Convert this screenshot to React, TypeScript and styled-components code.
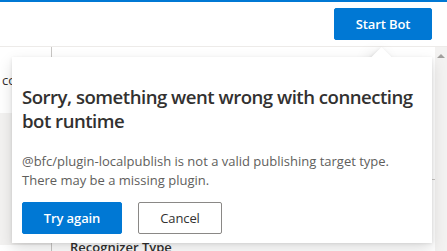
import React from "react";
import styled, { createGlobalStyle } from "styled-components";

const GlobalStyle = createGlobalStyle`
  html, body {
    margin: 0;
    padding: 0;
    background: #ffffff;
    overflow: hidden;
  }
  body {
    font-family: "Open Sans", "Noto Sans", sans-serif;
    color: #323130;
  }
  * { box-sizing: border-box; }
`;

const Page = styled.div`
  position: relative;
  width: 447px;
  height: 251px;
  overflow: hidden;
  display: flex;
  flex-direction: column;
  background: #ffffff;
`;

const TopBar = styled.header`
  flex: none;
  height: 47px;
  border-top: 2px solid #0078d4;
  border-bottom: 1px solid #edebe9;
  display: flex;
  justify-content: flex-end;
  align-items: flex-start;
  padding: 6px 15px 0 0;
`;

const Button = styled.button<{ $primary?: boolean; $width: number }>`
  width: ${(p) => p.$width}px;
  height: 32px;
  border-radius: 2px;
  font-family: "Open Sans", "Noto Sans", sans-serif;
  font-size: 13px;
  font-weight: ${(p) => (p.$primary ? 600 : 400)};
  letter-spacing: -0.1px;
  padding: 0;
  cursor: pointer;
  background: ${(p) => (p.$primary ? "#0078d4" : "#ffffff")};
  color: ${(p) => (p.$primary ? "#ffffff" : "#323130")};
  border: 1px solid ${(p) => (p.$primary ? "#0078d4" : "#8a8886")};
`;

const Body = styled.div`
  flex: 1;
  display: flex;
  min-height: 0;
`;

const LeftNav = styled.nav`
  flex: none;
  width: 52px;
  border-right: 1px solid #c8c6c4;
  display: flex;
  flex-direction: column;
  overflow: hidden;
`;

const NavItem = styled.div<{ $selected?: boolean }>`
  height: ${(p) => (p.$selected ? 132 : 66)}px;
  flex: none;
  display: flex;
  align-items: ${(p) => (p.$selected ? "flex-start" : "center")};
  padding-left: 2px;
  font-size: 13px;
  color: #323130;
  white-space: nowrap;
  background: ${(p) => (p.$selected ? "#f3f2f1" : "#ffffff")};
`;

const Main = styled.main`
  flex: 1;
  display: flex;
  flex-direction: column;
  min-width: 0;
`;

const Section = styled.section`
  flex: none;
  height: 133px;
  border-bottom: 1px solid #c8c6c4;
`;

const FieldLabel = styled.div`
  margin: 58px 0 0 18px;
  font-size: 13px;
  font-weight: 600;
  color: #323130;
  white-space: nowrap;
`;

const ScrollTrack = styled.div`
  flex: none;
  width: 12px;
  background: #f3f2f1;
  display: flex;
  justify-content: center;
  padding-top: 7px;
`;

const ArrowUp = styled.div`
  width: 0;
  height: 0;
  border-left: 4px solid transparent;
  border-right: 4px solid transparent;
  border-bottom: 4px solid #a19f9d;
`;

const Callout = styled.div`
  position: absolute;
  left: 12px;
  top: 57px;
  width: 420px;
  background: #ffffff;
  box-shadow: 0 6.4px 14.4px 0 rgba(0, 0, 0, 0.132),
    0 1.2px 3.6px 0 rgba(0, 0, 0, 0.108);
`;

const Beak = styled.div`
  position: absolute;
  left: 362px;
  top: -7.5px;
  width: 15px;
  height: 15px;
  background: #ffffff;
  transform: rotate(45deg);
  box-shadow: 0 6.4px 14.4px 0 rgba(0, 0, 0, 0.132),
    0 1.2px 3.6px 0 rgba(0, 0, 0, 0.108);
`;

const CalloutContent = styled.div`
  position: relative;
  background: #ffffff;
  padding: 28px 4px 9px 10px;
  display: flex;
  flex-direction: column;
`;

const Title = styled.h2`
  margin: 0;
  font-size: 18.6px;
  line-height: 24px;
  font-weight: 650;
  letter-spacing: -0.5px;
  color: #323130;
`;

const Message = styled.p`
  margin: 19px 0 0 0;
  max-width: 380px;
  font-size: 13px;
  line-height: 18.5px;
  color: #605e5c;
`;

const Actions = styled.div`
  display: flex;
  gap: 16px;
  margin-top: 13px;
`;

export default function App() {
  return (
    <>
      <GlobalStyle />
      <Page>
        <TopBar>
          <Button $primary $width={98}>Start Bot</Button>
        </TopBar>
        <Body>
          <LeftNav>
            <NavItem>configure</NavItem>
            <NavItem $selected />
          </LeftNav>
          <Main>
            <Section />
            <FieldLabel>Recognizer Type</FieldLabel>
          </Main>
          <ScrollTrack>
            <ArrowUp />
          </ScrollTrack>
        </Body>
        <Callout role="dialog">
          <Beak />
          <CalloutContent>
            <Title>Sorry, something went wrong with connecting bot runtime</Title>
            <Message>
              @bfc/plugin-localpublish is not a valid publishing target type.
              There may be a missing plugin.
            </Message>
            <Actions>
              <Button $primary $width={100}>Try again</Button>
              <Button $width={84}>Cancel</Button>
            </Actions>
          </CalloutContent>
        </Callout>
      </Page>
    </>
  );
}
